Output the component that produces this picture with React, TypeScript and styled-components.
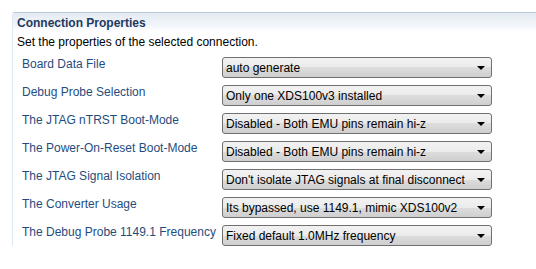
import React from 'react';
import styled, { createGlobalStyle } from 'styled-components';

const GlobalStyle = createGlobalStyle`
  html, body {
    margin: 0;
    padding: 0;
    background: #ffffff;
  }
  body {
    font-family: "Liberation Sans", Arial, sans-serif;
    font-size: 12px;
  }
`;

const rows: { label: string; value: string }[] = [
  { label: 'Board Data File', value: 'auto generate' },
  { label: 'Debug Probe Selection', value: 'Only one XDS100v3 installed' },
  { label: 'The JTAG nTRST Boot-Mode', value: 'Disabled - Both EMU pins remain hi-z' },
  { label: 'The Power-On-Reset Boot-Mode', value: 'Disabled - Both EMU pins remain hi-z' },
  { label: 'The JTAG Signal Isolation', value: "Don't isolate JTAG signals at final disconnect" },
  { label: 'The Converter Usage', value: 'Its bypassed, use 1149.1, mimic XDS100v2' },
  { label: 'The Debug Probe 1149.1 Frequency', value: 'Fixed default 1.0MHz frequency' },
];

const Page = styled.div`
  width: 536px;
  height: 269px;
  padding: 12px 0 0 12px;
  box-sizing: border-box;
  overflow: hidden;
`;

const Section = styled.section`
  border-top: 1px solid #b7c8da;
  border-left: 1px solid #dfe7f0;
  border-top-left-radius: 3px;
  margin-right: -4px;
`;

const TitleBar = styled.div`
  height: 19px;
  padding-left: 4px;
  background: linear-gradient(to bottom, #e4ebf3 0%, #f3f6fa 70%, #ffffff 100%);
  display: flex;
  align-items: center;
`;

const Title = styled.h2`
  margin: 0;
  font-size: 12px;
  font-weight: bold;
  color: #1e3a5f;
`;

const Description = styled.p`
  margin: 3px 0 0 4px;
  color: #000000;
  font-size: 12px;
`;

const Form = styled.div`
  margin: 8px 0 0 9px;
  display: grid;
  grid-template-columns: 200px 270px;
  row-gap: 7px;
`;

const Label = styled.label`
  color: #1f4d7e;
  font-size: 12px;
  padding-top: 0;
  white-space: nowrap;
`;

const Combo = styled.div`
  height: 21px;
  box-sizing: border-box;
  border: 1px solid #707070;
  border-radius: 3px;
  background: linear-gradient(to bottom, #f2f2f2 0%, #ebebeb 50%, #dddddd 50%, #cfcfcf 100%);
  display: flex;
  align-items: center;
  justify-content: space-between;
  padding: 0 6px 0 3px;
  color: #000000;
  font-size: 12px;
  white-space: nowrap;
`;

const Arrow = styled.span`
  width: 0;
  height: 0;
  border-left: 4px solid transparent;
  border-right: 4px solid transparent;
  border-top: 4px solid #000000;
`;

export default function App() {
  return (
    <Page>
      <GlobalStyle />
      <Section>
        <TitleBar>
          <Title>Connection Properties</Title>
        </TitleBar>
        <Description>Set the properties of the selected connection.</Description>
        <Form>
          {rows.map((r) => (
            <React.Fragment key={r.label}>
              <Label>{r.label}</Label>
              <Combo>
                <span>{r.value}</span>
                <Arrow />
              </Combo>
            </React.Fragment>
          ))}
        </Form>
      </Section>
    </Page>
  );
}
